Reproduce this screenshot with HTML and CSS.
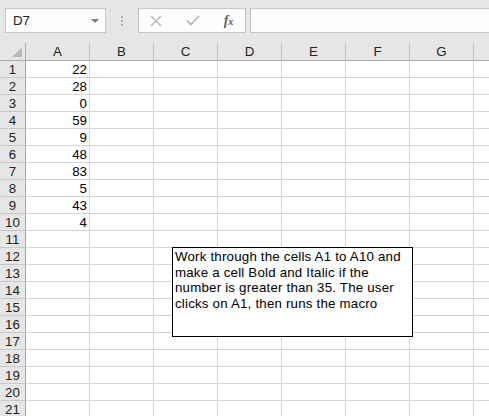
FILE: index.html
```html
<!DOCTYPE html>
<html>
<head>
<meta charset="utf-8">
<link rel="stylesheet" href="styles.css">
</head>
<body>
<div class="app">
  <div class="toolbar">
    <div class="namebox"><span class="name">D7</span><svg class="dd" width="8" height="4" viewBox="0 0 8 4"><path d="M0 0H8L4 4Z" fill="#7a7a7a"/></svg></div>
    <div class="grip"><span></span><span></span><span></span></div>
    <div class="fxbtns">
      <svg class="ic" width="12" height="12" viewBox="0 0 12 12"><path d="M1 1L11 11M11 1L1 11" stroke="#b4b4b4" stroke-width="1.3" fill="none"/></svg>
      <svg class="ic" width="14" height="11" viewBox="0 0 14 11"><path d="M1 5.5L5 9.5L13 1" stroke="#b4b4b4" stroke-width="1.6" fill="none"/></svg>
      <span class="fx">f<i>x</i></span>
    </div>
    <div class="formula"></div>
  </div>
  <div class="sheet">
    <div class="row head">
      <div class="rh corner"><svg width="10" height="10" viewBox="0 0 10 10"><path d="M10 0V10H0Z" fill="#b9b9b9"/></svg></div>
      <div class="ch">A</div><div class="ch">B</div><div class="ch">C</div><div class="ch">D</div><div class="ch">E</div><div class="ch">F</div><div class="ch">G</div><div class="ch"></div>
    </div>
    <div class="row"><div class="rh">1</div><div class="c num">22</div><div class="c"></div><div class="c"></div><div class="c"></div><div class="c"></div><div class="c"></div><div class="c"></div><div class="c"></div></div>
    <div class="row"><div class="rh">2</div><div class="c num">28</div><div class="c"></div><div class="c"></div><div class="c"></div><div class="c"></div><div class="c"></div><div class="c"></div><div class="c"></div></div>
    <div class="row"><div class="rh">3</div><div class="c num">0</div><div class="c"></div><div class="c"></div><div class="c"></div><div class="c"></div><div class="c"></div><div class="c"></div><div class="c"></div></div>
    <div class="row"><div class="rh">4</div><div class="c num">59</div><div class="c"></div><div class="c"></div><div class="c"></div><div class="c"></div><div class="c"></div><div class="c"></div><div class="c"></div></div>
    <div class="row"><div class="rh">5</div><div class="c num">9</div><div class="c"></div><div class="c"></div><div class="c"></div><div class="c"></div><div class="c"></div><div class="c"></div><div class="c"></div></div>
    <div class="row"><div class="rh">6</div><div class="c num">48</div><div class="c"></div><div class="c"></div><div class="c"></div><div class="c"></div><div class="c"></div><div class="c"></div><div class="c"></div></div>
    <div class="row"><div class="rh">7</div><div class="c num">83</div><div class="c"></div><div class="c"></div><div class="c"></div><div class="c"></div><div class="c"></div><div class="c"></div><div class="c"></div></div>
    <div class="row"><div class="rh">8</div><div class="c num">5</div><div class="c"></div><div class="c"></div><div class="c"></div><div class="c"></div><div class="c"></div><div class="c"></div><div class="c"></div></div>
    <div class="row"><div class="rh">9</div><div class="c num">43</div><div class="c"></div><div class="c"></div><div class="c"></div><div class="c"></div><div class="c"></div><div class="c"></div><div class="c"></div></div>
    <div class="row"><div class="rh">10</div><div class="c num">4</div><div class="c"></div><div class="c"></div><div class="c"></div><div class="c"></div><div class="c"></div><div class="c"></div><div class="c"></div></div>
    <div class="row"><div class="rh">11</div><div class="c"></div><div class="c"></div><div class="c"></div><div class="c"></div><div class="c"></div><div class="c"></div><div class="c"></div><div class="c"></div></div>
    <div class="row"><div class="rh">12</div><div class="c"></div><div class="c"></div><div class="c"></div><div class="c"></div><div class="c"></div><div class="c"></div><div class="c"></div><div class="c"></div></div>
    <div class="row"><div class="rh">13</div><div class="c"></div><div class="c"></div><div class="c"></div><div class="c"></div><div class="c"></div><div class="c"></div><div class="c"></div><div class="c"></div></div>
    <div class="row"><div class="rh">14</div><div class="c"></div><div class="c"></div><div class="c"></div><div class="c"></div><div class="c"></div><div class="c"></div><div class="c"></div><div class="c"></div></div>
    <div class="row"><div class="rh">15</div><div class="c"></div><div class="c"></div><div class="c"></div><div class="c"></div><div class="c"></div><div class="c"></div><div class="c"></div><div class="c"></div></div>
    <div class="row"><div class="rh">16</div><div class="c"></div><div class="c"></div><div class="c"></div><div class="c"></div><div class="c"></div><div class="c"></div><div class="c"></div><div class="c"></div></div>
    <div class="row"><div class="rh">17</div><div class="c"></div><div class="c"></div><div class="c"></div><div class="c"></div><div class="c"></div><div class="c"></div><div class="c"></div><div class="c"></div></div>
    <div class="row"><div class="rh">18</div><div class="c"></div><div class="c"></div><div class="c"></div><div class="c"></div><div class="c"></div><div class="c"></div><div class="c"></div><div class="c"></div></div>
    <div class="row"><div class="rh">19</div><div class="c"></div><div class="c"></div><div class="c"></div><div class="c"></div><div class="c"></div><div class="c"></div><div class="c"></div><div class="c"></div></div>
    <div class="row"><div class="rh">20</div><div class="c"></div><div class="c"></div><div class="c"></div><div class="c"></div><div class="c"></div><div class="c"></div><div class="c"></div><div class="c"></div></div>
    <div class="row"><div class="rh">21</div><div class="c"></div><div class="c"></div><div class="c"></div><div class="c"></div><div class="c"></div><div class="c"></div><div class="c"></div><div class="c"></div></div>
    <div class="textbox">Work through the cells A1 to A10 and make a cell Bold and Italic if the number is greater than 35. The user clicks on A1, then runs the macro</div>
  </div>
</div>
</body>
</html>
```

FILE: styles.css
```css
html, body {
  margin: 0;
  padding: 0;
  background: #ffffff;
  overflow: hidden;
}
.app {
  width: 489px;
  height: 416px;
  overflow: hidden;
  font-family: "Liberation Sans", Arial, sans-serif;
  color: #000;
}
.toolbar {
  display: flex;
  align-items: flex-start;
  background: #e6e6e6;
  height: 43px;
  box-sizing: border-box;
  padding: 8px 0 0 5px;
}
.namebox {
  width: 101px;
  height: 25px;
  box-sizing: border-box;
  border: 1px solid #c6c6c6;
  background: #fdfdfd;
  display: flex;
  align-items: center;
  justify-content: space-between;
  padding: 0 6px 0 7px;
  flex: none;
}
.name {
  font-size: 13.3px;
  color: #222;
}
.dd {
  display: block;
  margin-top: 1px;
}
.grip {
  width: 32px;
  height: 25px;
  display: flex;
  flex-direction: column;
  align-items: center;
  justify-content: center;
  gap: 2px;
  flex: none;
}
.grip span {
  width: 2px;
  height: 2px;
  background: #b0b0b0;
}
.fxbtns {
  width: 108px;
  height: 25px;
  box-sizing: border-box;
  border: 1px solid #c6c6c6;
  background: #fdfdfd;
  display: flex;
  align-items: center;
  justify-content: space-between;
  padding: 0 12px 0 11px;
  flex: none;
}
.ic {
  display: block;
}
.fx {
  font-family: "Liberation Serif", "Times New Roman", serif;
  font-style: italic;
  font-weight: bold;
  font-size: 14px;
  color: #5f5f5f;
  letter-spacing: -0.5px;
}
.fx i {
  font-size: 11px;
}
.formula {
  margin-left: 4px;
  flex: 1;
  height: 25px;
  box-sizing: border-box;
  border: 1px solid #c6c6c6;
  border-right: none;
  background: #fdfdfd;
}
.sheet {
  position: relative;
}
.row {
  display: flex;
  height: 17px;
}
.rh {
  width: 25px;
  flex: none;
  height: 16px;
  line-height: 17px;
  background: #e6e6e6;
  border-right: 1px solid #ababab;
  border-bottom: 1px solid #c8c8c8;
  text-align: center;
  font-size: 13.3px;
  color: #222;
}
.c {
  width: 63px;
  flex: none;
  height: 16px;
  border-right: 1px solid #d4d4d4;
  border-bottom: 1px solid #d4d4d4;
  font-size: 13.3px;
  line-height: 17px;
  box-sizing: content-box;
}
.num {
  text-align: right;
  padding-right: 2px;
  width: 61px;
}
.head {
  height: 18px;
}
.head .rh,
.head .ch {
  height: 17px;
  border-bottom: 1px solid #ababab;
}
.head .rh {
  border-right: 1px solid #ababab;
  display: flex;
  align-items: flex-end;
  justify-content: flex-end;
  padding-right: 3px;
  width: 22px;
  box-sizing: content-box;
}
.head .rh svg {
  display: block;
  margin-bottom: 3px;
}
.ch {
  width: 63px;
  flex: none;
  background: #e6e6e6;
  border-right: 1px solid #c0c0c0;
  text-align: center;
  font-size: 13.3px;
  line-height: 18px;
  color: #222;
}
.textbox {
  position: absolute;
  left: 172px;
  top: 204px;
  width: 237px;
  height: 87px;
  border: 1px solid #000;
  background: #fff;
  padding: 1px 0 0 2px;
  box-sizing: content-box;
  font-size: 13.3px;
  line-height: 15.6px;
  letter-spacing: 0.2px;
  color: #000;
}
```
